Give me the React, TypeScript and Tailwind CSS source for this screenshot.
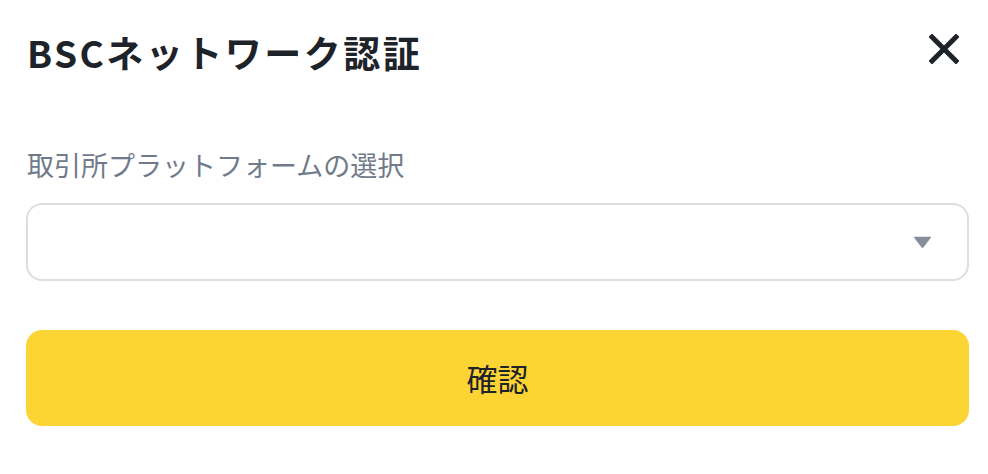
import { useState } from "react"

export default function App() {
  const [platform, setPlatform] = useState("")

  return (
    <div className="w-[988px] h-[474px] bg-white overflow-hidden font-['Noto_Sans_CJK_JP',sans-serif]">
      <div className="pl-[27px] pr-[19px] pt-[32px]">
        <div className="flex items-center justify-between w-[942px]">
          <h3 className="text-[37px] leading-[40px] tracking-[2.5px] font-bold text-[#1e2329]">
            BSCネットワーク認証
          </h3>
          <button className="mr-[10px] -mt-[6px] text-[#1e2329]" aria-label="close">
            <svg width="30" height="30" viewBox="0 0 30 30">
              <path d="M3 3 L27 27 M27 3 L3 27" stroke="currentColor" strokeWidth="5" strokeLinecap="square" />
            </svg>
          </button>
        </div>

        <p className="mt-[75px] text-[27px] leading-[36px] text-[#707a8a]">
          取引所プラットフォームの選択
        </p>

        <div className="mt-[20px] -ml-px w-[943px] h-[78px] border-2 border-[#dcdee2] rounded-[16px] flex items-center justify-end pr-[35px]">
          <select
            className="sr-only"
            value={platform}
            onChange={(e) => setPlatform(e.target.value)}
          >
            <option value=""></option>
          </select>
          <svg width="19" height="13" viewBox="0 0 18 12">
            <path d="M1.5 0.5 H16.5 Q17.6 0.5 16.9 1.6 L10 10.6 Q9 11.7 8 10.6 L1.1 1.6 Q0.4 0.5 1.5 0.5 Z" fill="#868e9b" />
          </svg>
        </div>

        <button className="mt-[49px] -ml-px w-[943px] h-[96px] rounded-[16px] bg-[#fcd535] text-[31px] font-normal text-[#1e2329]">
          確認
        </button>
      </div>
    </div>
  )
}
